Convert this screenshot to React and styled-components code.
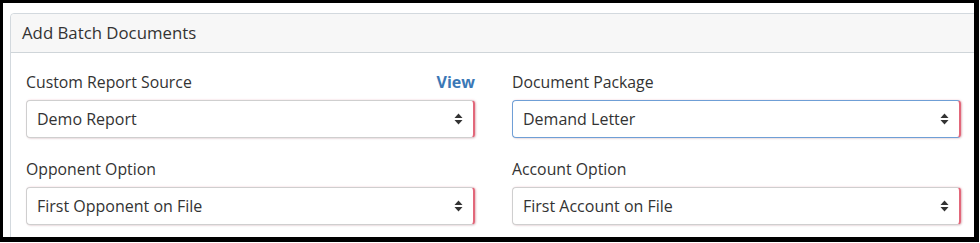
import styled, { createGlobalStyle } from 'styled-components';

const GlobalStyle = createGlobalStyle`
    html, body {
        margin: 0;
        padding: 0;
        background: #fff;
    }
    body {
        font-family: "Open Sans", "Liberation Sans", sans-serif;
        color: #333;
    }
`;

const Frame = styled.div`
    box-sizing: border-box;
    width: 979px;
    height: 242px;
    border-style: solid;
    border-color: #000;
    border-width: 3px 5px 5px 3px;
    padding: 10px 0 0 7px;
    overflow: hidden;
    background: #fff;
`;

const Card = styled.div`
    box-sizing: border-box;
    width: 970px;
    border: 1px solid #d3d9de;
    border-radius: 4px;
    background: #fff;
`;

const CardHeader = styled.div`
    background: #f7f7f7;
    border-bottom: 1px solid #cfd5d9;
    border-radius: 4px 4px 0 0;
    padding: 8px 11px 8px 11px;
    font-size: 16.8px;
    line-height: 22px;
    color: #333;
`;

const CardBody = styled.div`
    display: grid;
    grid-template-columns: 1fr 1fr;
    column-gap: 37px;
    row-gap: 20px;
    padding: 18px 18px 20px 15px;
`;

const Field = styled.div`
    display: flex;
    flex-direction: column;
`;

const LabelRow = styled.div`
    display: flex;
    align-items: center;
    justify-content: space-between;
    margin-bottom: 7px;
`;

const Label = styled.label`
    font-size: 15.8px;
    line-height: 22px;
    color: #333;
`;

const ViewLink = styled.a`
    font-size: 16px;
    line-height: 22px;
    font-weight: 700;
    color: #3b78b6;
    text-decoration: none;
    cursor: pointer;
`;

const SelectWrap = styled.div`
    position: relative;
    height: 38px;
`;

const Select = styled.select`
    appearance: none;
    -webkit-appearance: none;
    box-sizing: border-box;
    width: 100%;
    height: 38px;
    padding: 0 30px 0 10px;
    font-family: "Open Sans", "Liberation Sans", sans-serif;
    font-size: 16px;
    color: #333;
    background: #fff;
    border: 1px solid ${p => (p.$focused ? '#6f9fd6' : '#cfcfcf')};
    border-right: 2px solid #e2677a;
    border-radius: 4px;
    box-shadow: 1px 1px 2px rgba(0, 0, 0, 0.08), 1px 0 2px rgba(226, 103, 122, 0.35);
    outline: none;
`;

const Arrows = styled.svg`
    position: absolute;
    right: 12px;
    top: 50%;
    transform: translateY(-50%);
    pointer-events: none;
`;

const SortIcon = () => (
    <Arrows width="9" height="12" viewBox="0 0 9 12">
        <path d="M4.5 0.5 L8.5 5 L0.5 5 Z" fill="#333" />
        <path d="M0.5 7 L8.5 7 L4.5 11.5 Z" fill="#333" />
    </Arrows>
);

const SelectField = ({ label, value, focused, action }) => (
    <Field>
        <LabelRow>
            <Label>{label}</Label>
            {action && <ViewLink>{action}</ViewLink>}
        </LabelRow>
        <SelectWrap>
            <Select $focused={focused} defaultValue={value}>
                <option>{value}</option>
            </Select>
            <SortIcon />
        </SelectWrap>
    </Field>
);

const App = () => {
    return (
        <>
            <GlobalStyle />
            <Frame>
                <Card>
                    <CardHeader>Add Batch Documents</CardHeader>
                    <CardBody>
                        <SelectField label="Custom Report Source" value="Demo Report" action="View" />
                        <SelectField label="Document Package" value="Demand Letter" focused />
                        <SelectField label="Opponent Option" value="First Opponent on File" />
                        <SelectField label="Account Option" value="First Account on File" />
                    </CardBody>
                </Card>
            </Frame>
        </>
    );
};

export default App;
